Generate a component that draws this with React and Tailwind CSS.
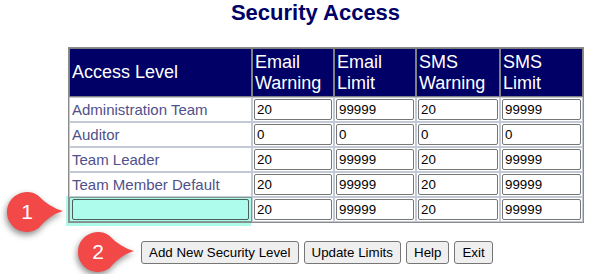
import React from "react";

const rows = [
  { name: "Administration Team", values: ["20", "99999", "20", "99999"] },
  { name: "Auditor", values: ["0", "0", "0", "0"] },
  { name: "Team Leader", values: ["20", "99999", "20", "99999"] },
  { name: "Team Member Default", values: ["20", "99999", "20", "99999"] },
];

const headers = [
  ["Email", "Warning"],
  ["Email", "Limit"],
  ["SMS", "Warning"],
  ["SMS", "Limit"],
];

const Marker = ({ label, className }) => (
  <div className={`absolute w-[64px] h-[46px] ${className}`}>
    <svg
      width="64"
      height="46"
      viewBox="0 0 64 46"
      className="absolute inset-0 drop-shadow-[-1px_3px_3px_rgba(0,0,0,0.45)]"
    >
      <path
        d="M58 21 Q44 25 33.1 38.6 A20 20 0 1 1 33.1 5.4 Q44 17 58 21 Z"
        fill="#f24848"
      />
    </svg>
    <span className="absolute left-[2px] top-[10px] w-[40px] text-center text-white text-[21px] leading-[24px] font-['Liberation_Sans',Arial,sans-serif]">
      {label}
    </span>
  </div>
);

const CellInput = ({ value }) => (
  <input
    type="text"
    defaultValue={value}
    className="block w-full h-[21px] px-[2px] border border-[#767676] rounded-[2px] bg-white text-[13.333px] text-black outline-none font-['Liberation_Sans',Arial,sans-serif]"
  />
);

export default function App() {
  return (
    <div className="relative w-[593px] h-[274px] bg-white overflow-hidden font-['Liberation_Sans',Arial,sans-serif]">
      <h1 className="pl-[38px] text-center text-[22px] leading-[26px] font-bold text-[#000066]">
        Security Access
      </h1>

      <div className="relative mt-[21px] ml-[68px]">
        {/* highlight behind the new level cell */}
        <div className="absolute left-[-2px] top-[149px] w-[185px] h-[30px] bg-[#aefaea]" />

        <table className="relative table-fixed w-[516px] border-separate border-spacing-0 border border-[#8c8c8c]">
          <colgroup>
            <col className="w-[183px]" />
            <col className="w-[82px]" />
            <col className="w-[82px]" />
            <col className="w-[84px]" />
            <col className="w-[83px]" />
          </colgroup>
          <thead>
            <tr>
              <th className="h-[49px] px-[2px] text-left align-middle bg-[#000066] border border-[#808080] text-white text-[18px] leading-[21px] font-normal">
                Access Level
              </th>
              {headers.map((h, i) => (
                <th
                  key={i}
                  className="h-[49px] px-[2px] text-left align-middle bg-[#000066] border border-[#808080] text-white text-[18px] leading-[21px] font-normal"
                >
                  {h[0]}
                  <br />
                  {h[1]}
                </th>
              ))}
            </tr>
          </thead>
          <tbody>
            {rows.map((r) => (
              <tr key={r.name}>
                <td className="h-[25px] px-[2px] border border-[#c3cad6] text-[15px] leading-[17px] text-[#50508a] whitespace-nowrap">
                  {r.name}
                </td>
                {r.values.map((v, i) => (
                  <td key={i} className="h-[25px] p-[1px] border border-[#c3cad6]">
                    <CellInput value={v} />
                  </td>
                ))}
              </tr>
            ))}
            <tr>
              <td className="h-[25px] px-[2px] border border-[#7f9a94]">
                <input
                  type="text"
                  className="block w-full h-[21px] border border-[#4b5f5a] rounded-[2px] bg-[#aefcec] outline-none"
                />
              </td>
              {["20", "99999", "20", "99999"].map((v, i) => (
                <td key={i} className="h-[25px] p-[1px] border border-[#c3cad6]">
                  <CellInput value={v} />
                </td>
              ))}
            </tr>
          </tbody>
        </table>
      </div>

      <div className="flex gap-[5px] mt-[18px] ml-[141px]">
        {["Add New Security Level", "Update Limits", "Help", "Exit"].map((b) => (
          <button
            key={b}
            className="h-[23px] px-[7px] bg-[#efefef] border border-[#767676] rounded-[3px] text-[13.333px] text-black leading-none"
          >
            {b}
          </button>
        ))}
      </div>

      <Marker label="1" className="left-[5px] top-[190px]" />
      <Marker label="2" className="left-[76px] top-[230px]" />
    </div>
  );
}
